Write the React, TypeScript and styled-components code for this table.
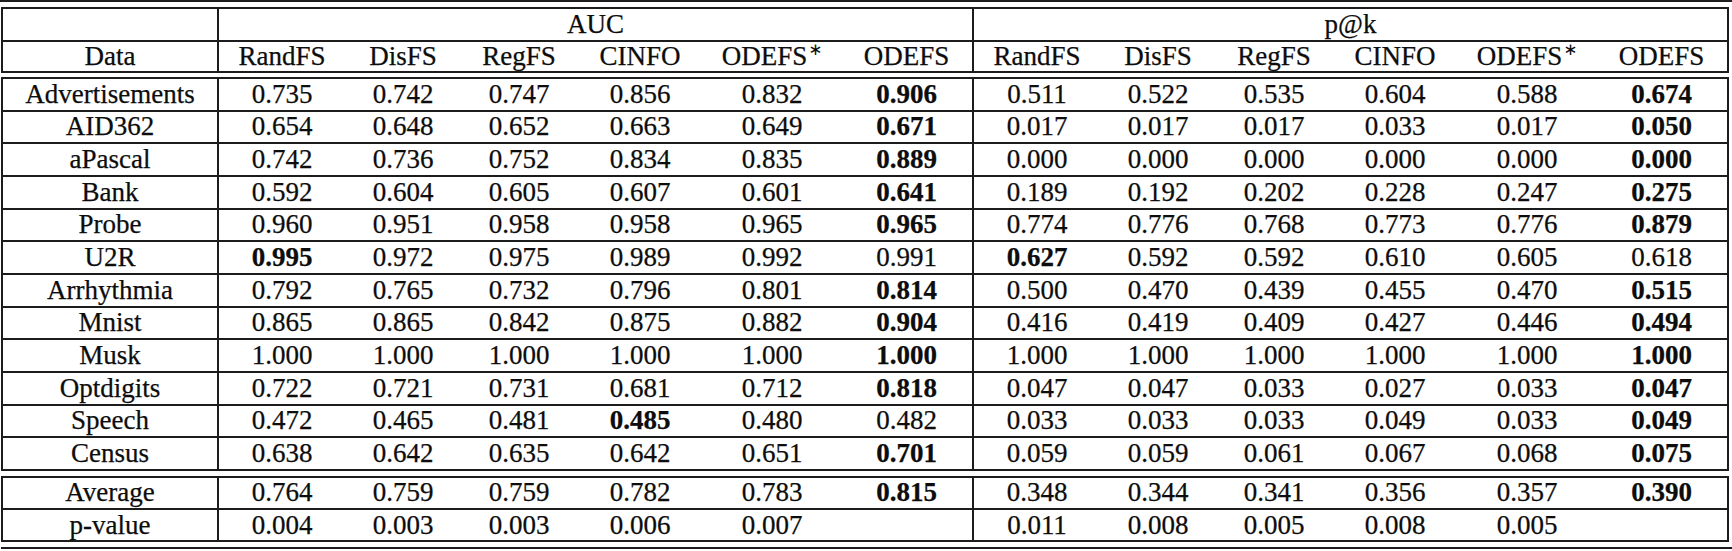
import styled, { createGlobalStyle } from "styled-components";

const GlobalStyle = createGlobalStyle`
  html, body {
    margin: 0;
    padding: 0;
    background: #fff;
  }
  body {
    font-family: "Liberation Serif", "Times New Roman", serif;
    color: #0d0d0d;
  }
`;

interface ResultRow {
  name: string;
  auc: string[];
  pk: string[];
  aucBest: number;
  pkBest: number;
}

const methods = ["RandFS", "DisFS", "RegFS", "CINFO", "ODEFS*", "ODEFS"];
const colWidths = [216, 128, 116, 116, 126, 138, 131, 128, 116, 116, 126, 138, 133];

const results: ResultRow[] = [
  { name: "Advertisements", auc: ["0.735", "0.742", "0.747", "0.856", "0.832", "0.906"], pk: ["0.511", "0.522", "0.535", "0.604", "0.588", "0.674"], aucBest: 5, pkBest: 5 },
  { name: "AID362", auc: ["0.654", "0.648", "0.652", "0.663", "0.649", "0.671"], pk: ["0.017", "0.017", "0.017", "0.033", "0.017", "0.050"], aucBest: 5, pkBest: 5 },
  { name: "aPascal", auc: ["0.742", "0.736", "0.752", "0.834", "0.835", "0.889"], pk: ["0.000", "0.000", "0.000", "0.000", "0.000", "0.000"], aucBest: 5, pkBest: 5 },
  { name: "Bank", auc: ["0.592", "0.604", "0.605", "0.607", "0.601", "0.641"], pk: ["0.189", "0.192", "0.202", "0.228", "0.247", "0.275"], aucBest: 5, pkBest: 5 },
  { name: "Probe", auc: ["0.960", "0.951", "0.958", "0.958", "0.965", "0.965"], pk: ["0.774", "0.776", "0.768", "0.773", "0.776", "0.879"], aucBest: 5, pkBest: 5 },
  { name: "U2R", auc: ["0.995", "0.972", "0.975", "0.989", "0.992", "0.991"], pk: ["0.627", "0.592", "0.592", "0.610", "0.605", "0.618"], aucBest: 0, pkBest: 0 },
  { name: "Arrhythmia", auc: ["0.792", "0.765", "0.732", "0.796", "0.801", "0.814"], pk: ["0.500", "0.470", "0.439", "0.455", "0.470", "0.515"], aucBest: 5, pkBest: 5 },
  { name: "Mnist", auc: ["0.865", "0.865", "0.842", "0.875", "0.882", "0.904"], pk: ["0.416", "0.419", "0.409", "0.427", "0.446", "0.494"], aucBest: 5, pkBest: 5 },
  { name: "Musk", auc: ["1.000", "1.000", "1.000", "1.000", "1.000", "1.000"], pk: ["1.000", "1.000", "1.000", "1.000", "1.000", "1.000"], aucBest: 5, pkBest: 5 },
  { name: "Optdigits", auc: ["0.722", "0.721", "0.731", "0.681", "0.712", "0.818"], pk: ["0.047", "0.047", "0.033", "0.027", "0.033", "0.047"], aucBest: 5, pkBest: 5 },
  { name: "Speech", auc: ["0.472", "0.465", "0.481", "0.485", "0.480", "0.482"], pk: ["0.033", "0.033", "0.033", "0.049", "0.033", "0.049"], aucBest: 3, pkBest: 5 },
  { name: "Census", auc: ["0.638", "0.642", "0.635", "0.642", "0.651", "0.701"], pk: ["0.059", "0.059", "0.061", "0.067", "0.068", "0.075"], aucBest: 5, pkBest: 5 },
];

const summary: ResultRow[] = [
  { name: "Average", auc: ["0.764", "0.759", "0.759", "0.782", "0.783", "0.815"], pk: ["0.348", "0.344", "0.341", "0.356", "0.357", "0.390"], aucBest: 5, pkBest: 5 },
  { name: "p-value", auc: ["0.004", "0.003", "0.003", "0.006", "0.007", ""], pk: ["0.011", "0.008", "0.005", "0.008", "0.005", ""], aucBest: -1, pkBest: -1 },
];

const LINE = "2px solid #1c1c1c";

const Page = styled.div`
  width: 1732px;
  height: 551px;
  box-sizing: border-box;
  padding: 5px 0 0 1px;
  border-top: ${LINE};
`;

const Block = styled.table<{ $gap: number }>`
  width: 1728px;
  margin-top: ${p => p.$gap}px;
  table-layout: fixed;
  border-collapse: separate;
  border-spacing: 0;
  font-family: "Liberation Serif", "Times New Roman", serif;
  font-size: 27px;
  line-height: 1;
  color: #0d0d0d;
  -webkit-text-stroke: 0.25px #0d0d0d;

  & tr:first-child > td {
    border-top: ${LINE};
  }
  & td:first-child {
    border-left: ${LINE};
  }
  & td:last-child {
    border-right: ${LINE};
  }
`;

const Col = styled.col<{ $w: number }>`
  width: ${p => p.$w}px;
`;

const Row = styled.tr<{ $h: number }>`
  height: ${p => p.$h}px;
`;

const Cell = styled.td<{ $sep?: boolean; $bold?: boolean }>`
  box-sizing: border-box;
  padding: 0;
  text-align: center;
  vertical-align: middle;
  white-space: nowrap;
  border-bottom: ${LINE};
  border-left: ${p => (p.$sep ? LINE : "none")};
  font-weight: ${p => (p.$bold ? 700 : 400)};
`;

const Star = styled.span`
  display: inline-block;
  margin-left: 1px;
  font-family: "DejaVu Sans", "Liberation Serif", sans-serif;
  font-size: 0.62em;
  line-height: 0;
  vertical-align: 0.62em;
  -webkit-text-stroke: 0;
`;

const BottomRule = styled.div`
  width: 1731px;
  margin-top: 5px;
  border-top: ${LINE};
`;

const Columns = () => (
  <colgroup>
    {colWidths.map((w, i) => (
      <Col key={i} $w={w} />
    ))}
  </colgroup>
);

const MethodName = ({ name }: { name: string }) =>
  name.endsWith("*") ? (
    <>
      {name.slice(0, -1)}
      <Star>∗</Star>
    </>
  ) : (
    <>{name}</>
  );

const ResultLine = ({ row, h }: { row: ResultRow; h: number }) => (
  <Row $h={h}>
    <Cell>{row.name}</Cell>
    {row.auc.map((v, i) => (
      <Cell key={"a" + i} $sep={i === 0} $bold={i === row.aucBest}>
        {v}
      </Cell>
    ))}
    {row.pk.map((v, i) => (
      <Cell key={"p" + i} $sep={i === 0} $bold={i === row.pkBest}>
        {v}
      </Cell>
    ))}
  </Row>
);

const App = () => (
  <>
    <GlobalStyle />
    <Page>
      <Block $gap={0}>
        <Columns />
        <tbody>
          <Row $h={35}>
            <Cell />
            <Cell colSpan={6} $sep>
              AUC
            </Cell>
            <Cell colSpan={6} $sep>
              p@k
            </Cell>
          </Row>
          <Row $h={31}>
            <Cell>Data</Cell>
            {[...methods, ...methods].map((m, i) => (
              <Cell key={i} $sep={i % 6 === 0}>
                <MethodName name={m} />
              </Cell>
            ))}
          </Row>
        </tbody>
      </Block>
      <Block $gap={4}>
        <Columns />
        <tbody>
          {results.map((r, i) => (
            <ResultLine key={r.name} row={r} h={i === 0 ? 34.67 : 32.67} />
          ))}
        </tbody>
      </Block>
      <Block $gap={5}>
        <Columns />
        <tbody>
          {summary.map((r, i) => (
            <ResultLine key={r.name} row={r} h={i === 0 ? 34 : 32.5} />
          ))}
        </tbody>
      </Block>
      <BottomRule />
    </Page>
  </>
);

export default App;
